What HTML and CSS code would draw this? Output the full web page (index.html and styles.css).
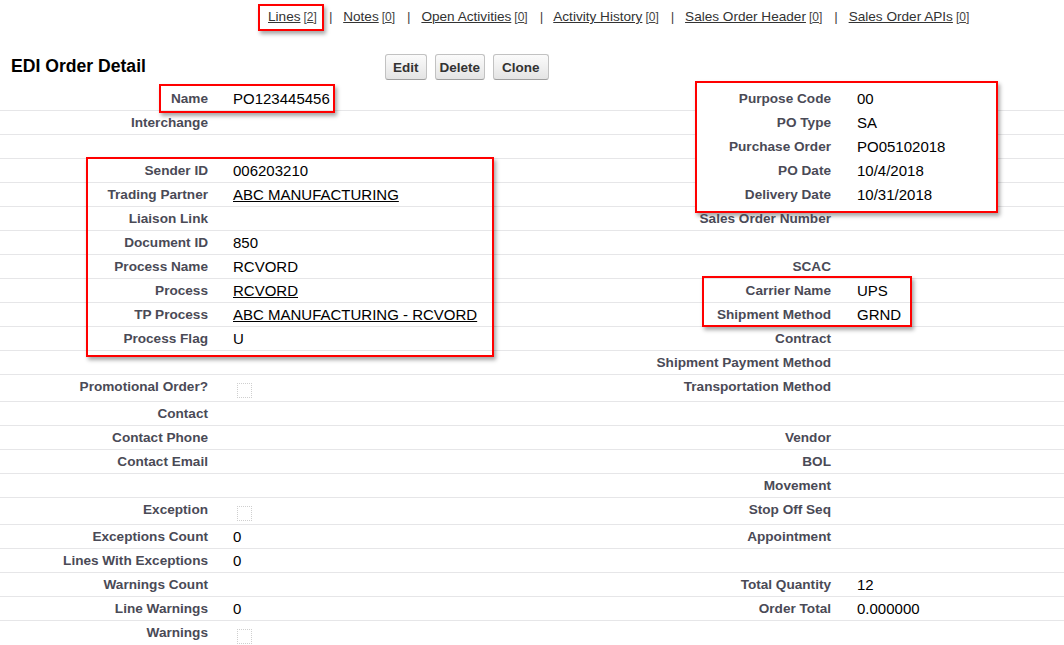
FILE: index.html
```html
<!DOCTYPE html>
<html>
<head>
<meta charset="utf-8">
<title>EDI Order Detail</title>
<link rel="stylesheet" href="styles.css">
</head>
<body>
<div class="page">
  <div class="rel-links">
    <a class="rl" href="#">Lines</a><span class="cnt">[<u>2</u>]</span><span class="sep">|</span>
    <a class="rl" href="#">Notes</a><span class="cnt">[<u>0</u>]</span><span class="sep">|</span>
    <a class="rl" href="#">Open Activities</a><span class="cnt">[<u>0</u>]</span><span class="sep">|</span>
    <a class="rl" href="#">Activity History</a><span class="cnt">[<u>0</u>]</span><span class="sep">|</span>
    <a class="rl" href="#">Sales Order Header</a><span class="cnt">[<u>0</u>]</span><span class="sep">|</span>
    <a class="rl" href="#">Sales Order APIs</a><span class="cnt">[<u>0</u>]</span>
  </div>

  <div class="pb-header">
    <h2 class="pb-title">EDI Order Detail</h2>
    <div class="pb-buttons">
      <button class="btn">Edit</button>
      <button class="btn btn-tight">Delete</button>
      <button class="btn btn-wide">Clone</button>
    </div>
  </div>

  <table class="detail">
    <colgroup>
      <col class="c-l1"><col class="c-d1"><col class="c-l2"><col class="c-d2">
    </colgroup>
    <tbody>
      <tr><td class="lab"><span class="t">Name</span></td><td class="dat"><span class="t">PO123445456</span></td><td class="lab"><span class="t">Purpose Code</span></td><td class="dat"><span class="t">00</span></td></tr>
      <tr><td class="lab"><span class="t">Interchange</span></td><td class="dat"></td><td class="lab"><span class="t">PO Type</span></td><td class="dat"><span class="t">SA</span></td></tr>
      <tr><td class="lab"></td><td class="dat"></td><td class="lab"><span class="t">Purchase Order</span></td><td class="dat"><span class="t">PO05102018</span></td></tr>
      <tr><td class="lab"><span class="t">Sender ID</span></td><td class="dat"><span class="t">006203210</span></td><td class="lab"><span class="t">PO Date</span></td><td class="dat"><span class="t">10/4/2018</span></td></tr>
      <tr><td class="lab"><span class="t">Trading Partner</span></td><td class="dat"><a class="t lnk" href="#">ABC MANUFACTURING</a></td><td class="lab"><span class="t">Delivery Date</span></td><td class="dat"><span class="t">10/31/2018</span></td></tr>
      <tr><td class="lab"><span class="t">Liaison Link</span></td><td class="dat"></td><td class="lab"><span class="t">Sales Order Number</span></td><td class="dat"></td></tr>
      <tr><td class="lab"><span class="t">Document ID</span></td><td class="dat"><span class="t">850</span></td><td class="lab"></td><td class="dat"></td></tr>
      <tr><td class="lab"><span class="t">Process Name</span></td><td class="dat"><span class="t">RCVORD</span></td><td class="lab"><span class="t">SCAC</span></td><td class="dat"></td></tr>
      <tr><td class="lab"><span class="t">Process</span></td><td class="dat"><a class="t lnk" href="#">RCVORD</a></td><td class="lab"><span class="t">Carrier Name</span></td><td class="dat"><span class="t">UPS</span></td></tr>
      <tr><td class="lab"><span class="t">TP Process</span></td><td class="dat"><a class="t lnk" href="#">ABC MANUFACTURING - RCVORD</a></td><td class="lab"><span class="t">Shipment Method</span></td><td class="dat"><span class="t">GRND</span></td></tr>
      <tr><td class="lab"><span class="t">Process Flag</span></td><td class="dat"><span class="t">U</span></td><td class="lab"><span class="t">Contract</span></td><td class="dat"></td></tr>
      <tr><td class="lab"></td><td class="dat"></td><td class="lab"><span class="t">Shipment Payment Method</span></td><td class="dat"></td></tr>
      <tr><td class="lab"><span class="t">Promotional Order?</span></td><td class="dat"><span class="chk"></span></td><td class="lab"><span class="t">Transportation Method</span></td><td class="dat"></td></tr>
      <tr><td class="lab"><span class="t">Contact</span></td><td class="dat"></td><td class="lab"></td><td class="dat"></td></tr>
      <tr><td class="lab"><span class="t">Contact Phone</span></td><td class="dat"></td><td class="lab"><span class="t">Vendor</span></td><td class="dat"></td></tr>
      <tr><td class="lab"><span class="t">Contact Email</span></td><td class="dat"></td><td class="lab"><span class="t">BOL</span></td><td class="dat"></td></tr>
      <tr><td class="lab"></td><td class="dat"></td><td class="lab"><span class="t">Movement</span></td><td class="dat"></td></tr>
      <tr><td class="lab"><span class="t">Exception</span></td><td class="dat"><span class="chk"></span></td><td class="lab"><span class="t">Stop Off Seq</span></td><td class="dat"></td></tr>
      <tr><td class="lab"><span class="t">Exceptions Count</span></td><td class="dat"><span class="t">0</span></td><td class="lab"><span class="t">Appointment</span></td><td class="dat"></td></tr>
      <tr><td class="lab"><span class="t">Lines With Exceptions</span></td><td class="dat"><span class="t">0</span></td><td class="lab"></td><td class="dat"></td></tr>
      <tr><td class="lab"><span class="t">Warnings Count</span></td><td class="dat"></td><td class="lab"><span class="t">Total Quantity</span></td><td class="dat"><span class="t">12</span></td></tr>
      <tr><td class="lab"><span class="t">Line Warnings</span></td><td class="dat"><span class="t">0</span></td><td class="lab"><span class="t">Order Total</span></td><td class="dat"><span class="t">0.000000</span></td></tr>
      <tr><td class="lab"><span class="t">Warnings</span></td><td class="dat"><span class="chk"></span></td><td class="lab"></td><td class="dat"></td></tr>
    </tbody>
  </table>

  <div class="mark mark-lines"></div>
  <div class="mark mark-name"></div>
  <div class="mark mark-po"></div>
  <div class="mark mark-sender"></div>
  <div class="mark mark-carrier"></div>
</div>
</body>
</html>
```
FILE: styles.css
```css
html, body {
  margin: 0;
  padding: 0;
  background: #fff;
}

.page {
  position: relative;
  width: 1064px;
  font-family: "Liberation Sans", Arial, sans-serif;
  color: #000;
}

/* related list links */
.rel-links {
  height: 48px;
  box-sizing: border-box;
  padding: 8px 0 0 268px;
  font-size: 13.6px;
  line-height: 18px;
  white-space: nowrap;
  color: #333;
}
.rl {
  color: #333;
  text-decoration: underline;
}
.cnt {
  font-size: 12px;
  color: #444;
  margin-left: 3px;
}
.cnt u {
  text-decoration: underline;
}
.sep {
  display: inline-block;
  margin: 0 7px 0 12px;
  color: #444;
}

/* header with title and buttons */
.pb-header {
  display: flex;
  align-items: flex-start;
  height: 39px;
  padding-left: 11px;
}
.pb-title {
  margin: 8px 0 0 0;
  width: 374px;
  font-size: 17.6px;
  line-height: 20px;
  font-weight: bold;
  color: #000;
}
.pb-buttons {
  display: flex;
  gap: 8px;
  margin-top: 6px;
}
.btn {
  height: 26px;
  padding: 0 7px;
  font-family: "Liberation Sans", Arial, sans-serif;
  font-size: 13.5px;
  font-weight: bold;
  color: #333;
  background: linear-gradient(#fbfbfb, #e4e4e4);
  border: 1px solid #c2c2c2;
  border-bottom-color: #9f9f9f;
  border-radius: 3px;
}
.btn-tight {
  padding: 0 4px;
}
.btn-wide {
  padding: 0 8px;
}

/* detail table */
.detail {
  width: 1064px;
  table-layout: fixed;
  border-collapse: separate;
  border-spacing: 0;
}
.c-l1 { width: 220px; }
.c-d1 { width: 380px; }
.c-l2 { width: 243px; }
.c-d2 { width: 221px; }

.detail td {
  vertical-align: top;
  border-bottom: 1px solid #e6e6e8;
  padding: 4px 0 4px 0;
  height: 15px;
}
.detail td.lab {
  text-align: right;
  padding-right: 12px;
  font-size: 13.6px;
  line-height: 15px;
  font-weight: bold;
  color: #4a4a56;
  white-space: nowrap;
}
.detail td.dat {
  padding-left: 13px;
  font-size: 15px;
  line-height: 16px;
  padding-top: 4px;
  padding-bottom: 3px;
  color: #000;
  white-space: nowrap;
}
.detail td.dat:last-child {
  padding-left: 14px;
}
.t {
  position: relative;
  z-index: 2;
}
.lnk {
  color: #000;
  text-decoration: underline;
}
.chk {
  display: block;
  width: 13px;
  height: 13px;
  margin: 4px 0 0 4px;
  border: 1px dotted #cfcfcf;
  background: #fff;
}

/* annotation boxes */
.mark {
  position: absolute;
  border: 2px solid #f00;
  box-shadow: 2px 3px 4px rgba(0, 0, 0, 0.35);
  box-sizing: border-box;
  z-index: 1;
  pointer-events: none;
}
.mark-lines { left: 258px; top: 4px; width: 66px; height: 27px; }
.mark-name { left: 159px; top: 84px; width: 176px; height: 29px; }
.mark-po { left: 695px; top: 81px; width: 303px; height: 132px; background: #fff; }
.mark-sender { left: 86px; top: 157px; width: 408px; height: 200px; }
.mark-carrier { left: 702px; top: 276px; width: 210px; height: 51px; }
```
